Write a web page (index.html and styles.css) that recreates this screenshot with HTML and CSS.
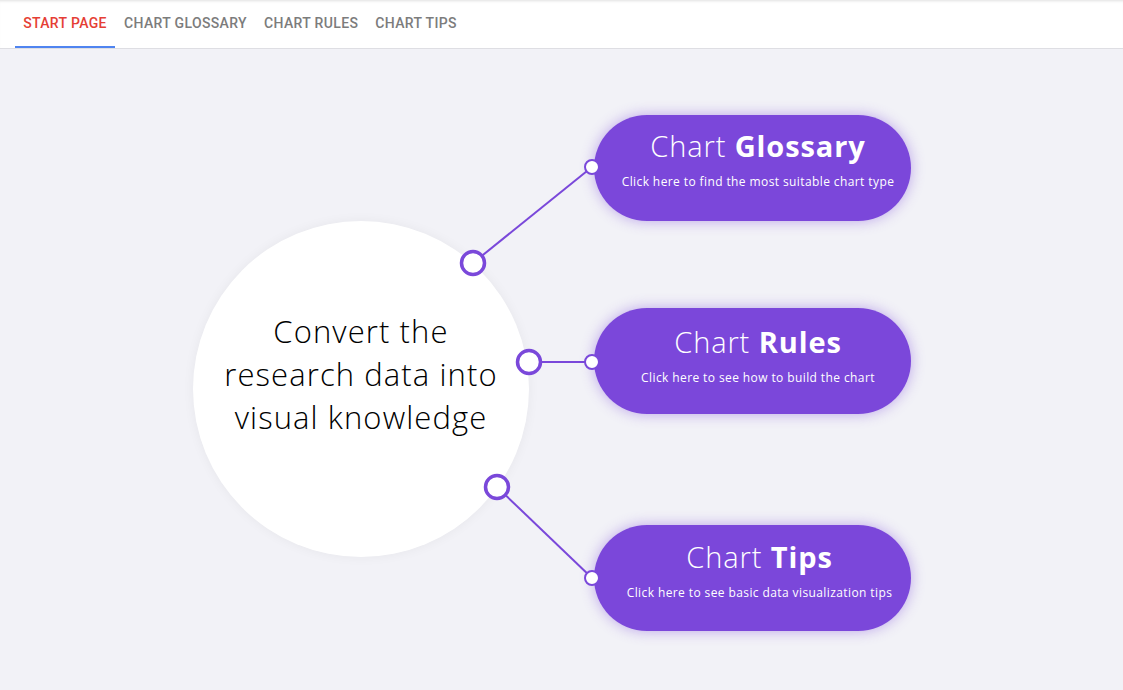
FILE: index.html
```html
<!DOCTYPE html>
<html lang="en">
<head>
    <meta charset="UTF-8">
    <meta name="viewport" content="width=device-width, initial-scale=1.0">
    <title>Chart Guide</title>
    <link rel="stylesheet" href="styles.css">
</head>
<body>
    <nav class="tabs">
        <a class="tab active">Start Page</a>
        <a class="tab">Chart Glossary</a>
        <a class="tab">Chart Rules</a>
        <a class="tab">Chart Tips</a>
    </nav>

    <div class="stage">
        <!-- connectors between the big circle and the pills -->
        <svg class="links" width="1123" height="642" viewBox="0 49 1123 642">
            <line x1="473" y1="263" x2="592" y2="167" />
            <line x1="529" y1="362" x2="592" y2="362" />
            <line x1="497" y1="487" x2="592" y2="578" />
        </svg>

        <div class="hub">
            <p>Convert the<br>research data into<br>visual knowledge</p>
        </div>

        <a class="pill pill-glossary">
            <h2>Chart <b>Glossary</b></h2>
            <span>Click here to find the most suitable chart type</span>
        </a>
        <a class="pill pill-rules">
            <h2>Chart <b>Rules</b></h2>
            <span>Click here to see how to build the chart</span>
        </a>
        <a class="pill pill-tips">
            <h2>Chart <b>Tips</b></h2>
            <span>Click here to see basic data visualization tips</span>
        </a>

        <svg class="dots" width="1123" height="642" viewBox="0 49 1123 642">
            <circle class="big" cx="473" cy="263" r="11.5" />
            <circle class="big" cx="529" cy="362" r="11.5" />
            <circle class="big" cx="497" cy="487" r="11.5" />
            <circle class="small" cx="592" cy="167" r="7" />
            <circle class="small" cx="592" cy="362" r="7" />
            <circle class="small" cx="592" cy="578" r="7" />
        </svg>
    </div>
</body>
</html>
```

FILE: styles.css
```css
body {
    margin: 0;
    background-color: #f2f2f7;
    font-family: "Open Sans", sans-serif;
    overflow: hidden;
}
.tabs {
    display: flex;
    height: 48px;
    padding-left: 15px;
    background: #fff;
    border-bottom: 1px solid #dedee3;
    box-shadow: inset 0 3px 3px -2px rgba(0, 0, 0, 0.12);
}
.tab {
    display: flex;
    align-items: center;
    padding: 0 8px;
    margin-right: 1px;
    font-family: Roboto, sans-serif;
    font-size: 14px;
    font-weight: 500;
    letter-spacing: 0.35px;
    text-transform: uppercase;
    color: #7c7c7c;
    border-bottom: 2px solid transparent;
    box-sizing: border-box;
}
.tab.active {
    color: #e53e35;
    border-bottom-color: #4f84f0;
    min-width: 100px;
    justify-content: center;
}
.stage {
    position: relative;
    height: 642px;
}
.links, .dots {
    position: absolute;
    left: 0;
    top: 0;
}
.links line {
    stroke: #7a48da;
    stroke-width: 2;
}
.dots {
    z-index: 2;
}
.dots circle {
    fill: #fff;
    stroke: #7a48da;
}
.dots .big {
    stroke-width: 3.5;
}
.dots .small {
    stroke-width: 2;
}
.hub {
    position: absolute;
    left: 193px;
    top: 172px;
    width: 336px;
    height: 336px;
    border-radius: 50%;
    background: #fff;
    box-shadow: 0 0 12px rgba(0, 0, 0, 0.05);
    display: flex;
    align-items: center;
    justify-content: center;
    z-index: 1;
}
.hub p {
    margin: 0 0 30px;
    text-align: center;
    font-size: 31px;
    font-weight: 300;
    letter-spacing: 1.1px;
    line-height: 43px;
    color: #000;
}
.pill {
    position: absolute;
    left: 594px;
    width: 317px;
    height: 106px;
    border-radius: 53px;
    background: #7b47da;
    color: #fff;
    box-shadow: 0 0 14px rgba(123, 71, 218, 0.45);
    display: flex;
    flex-direction: column;
    align-items: center;
    padding: 11px 0 0 11px;
    box-sizing: border-box;
    z-index: 1;
}
.pill-glossary { top: 66px; }
.pill-rules { top: 259px; padding-top: 14px; }
.pill-tips { top: 476px; padding-top: 12px; padding-left: 14px; }
.pill h2 {
    margin: 0;
    font-size: 29px;
    font-weight: 300;
    letter-spacing: 0.9px;
    line-height: 40px;
}
.pill h2 b {
    font-weight: 700;
}
.pill span {
    margin-top: 7px;
    font-size: 12px;
    letter-spacing: 0.4px;
}
```
